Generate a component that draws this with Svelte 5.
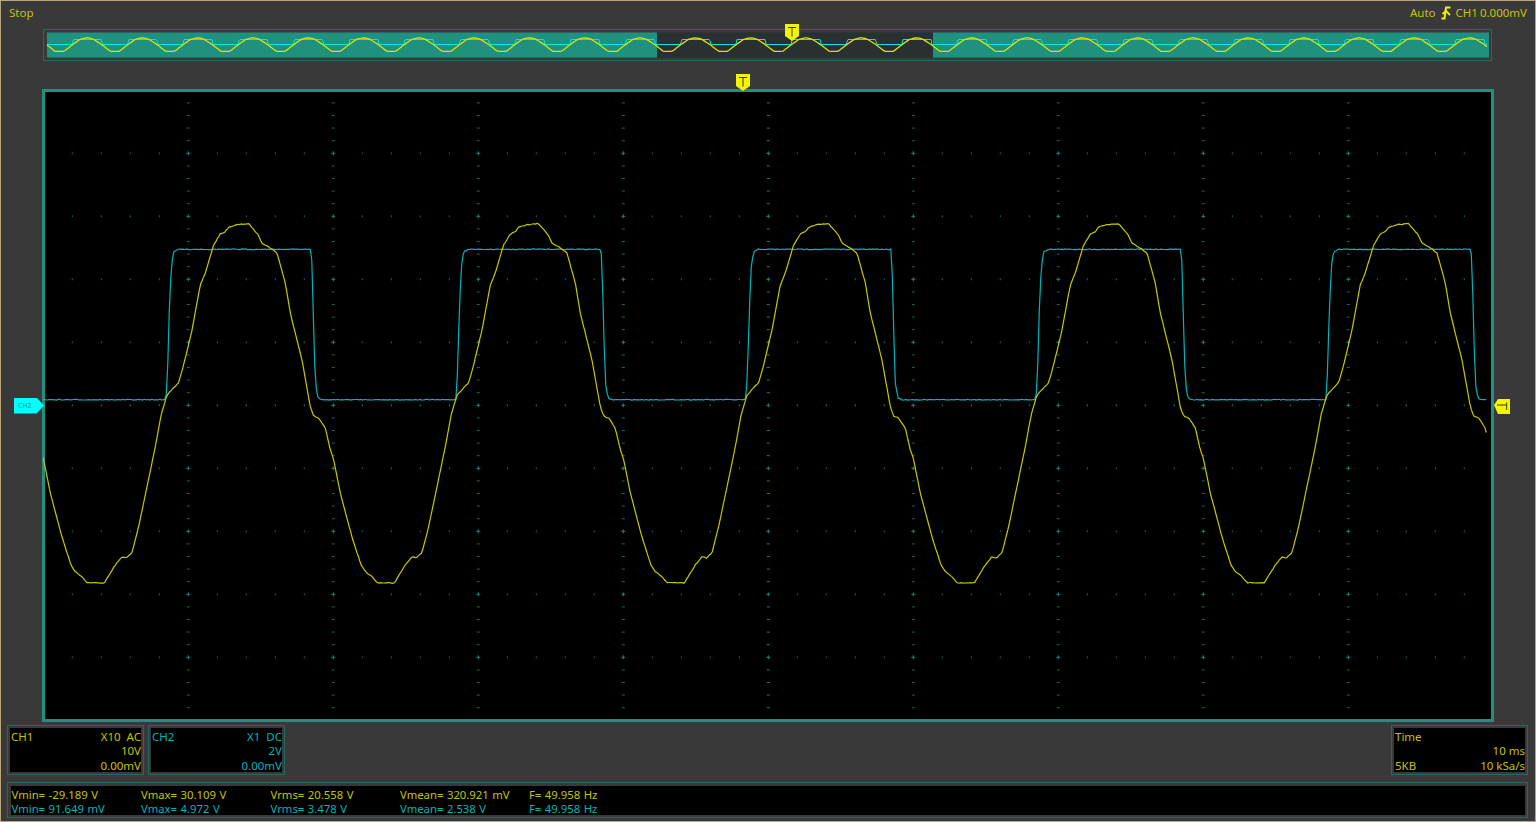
<script>
    // one period of each trace, x relative to the left edge of the scope
    const yellowShape = [
        [0, 458], [7, 493], [18.7, 537], [27.7, 565], [32, 571.7], [38.7, 576.7], [43.7, 582.7], [61, 583], [72, 565],
        [78.7, 556.7], [83, 558], [88.7, 552.7], [95, 528], [103.7, 486.7], [112, 446.7], [118, 414],
        [123.7, 395], [135.3, 382.7], [140.3, 365], [148.7, 330], [157, 285], [162, 273], [170.3, 245],
        [177, 234], [182, 231.7], [185.3, 227.3], [193.7, 224.7], [205.3, 223.7], [215, 235], [218.7, 243],
        [227, 248], [233.7, 253], [242, 283], [247, 313], [258.7, 360], [267, 406.7], [270.3, 416],
        [275.3, 418], [282, 428], [287, 450], [290, 458]
    ];
    const cyanShape = [
        [0, 399.7], [122.7, 399.7], [124.3, 370], [126, 310], [128, 266.7], [130.3, 251.7], [135.3, 249.3],
        [267.7, 249.3], [268.7, 263], [270.3, 326.7], [272, 383], [274.7, 398], [278.7, 399.7], [290, 399.7]
    ];
    // the overview traces are coarser, so they get their own shapes
    const ovYellowShape = [
        [0, 45], [8, 51.3], [17, 51.3], [25, 45], [33, 39.3], [40, 37.7], [46, 39], [55.3, 45]
    ];
    const ovCyanShape = [
        [0, 44.5], [25.3, 44.5], [26.3, 39.5], [54.5, 39.5], [55.3, 44.5]
    ];

    let seed = 7;
    function rnd() {
        seed = (seed * 16807) % 2147483647;
        return seed / 2147483647 - 0.5;
    }

    function at(shape, dx) {
        for (let i = 1; i < shape.length; i++) {
            if (dx <= shape[i][0]) {
                const a = shape[i - 1];
                const b = shape[i];
                return a[1] + ((dx - a[0]) / (b[0] - a[0])) * (b[1] - a[1]);
            }
        }
        return shape[shape.length - 1][1];
    }

    function mainTrace(shape, noise, end) {
        const pts = [];
        for (let x = 43.3; x <= end; x += 1.5) {
            const y = at(shape, (x - 43.3) % 290) + rnd() * noise;
            pts.push(x.toFixed(1) + "," + y.toFixed(1));
        }
        return pts.join(" ");
    }

    function overviewTrace(shape, step) {
        const pts = [];
        for (let x = 47; x <= 1487; x += step) {
            pts.push(x + "," + at(shape, (x - 47) % 55.3).toFixed(1));
        }
        return pts.join(" ");
    }

    const yellow = mainTrace(yellowShape, 0.7, 1487);
    const cyan = mainTrace(cyanShape, 0.8, 1487);
    const ovYellow = overviewTrace(ovYellowShape, 2);
    const ovCyan = overviewTrace(ovCyanShape, 1);

    // graticule, the middle column and row are a bit brighter
    const columns = [1, 2, 3, 4, 5, 6, 7, 8, 9].map((i) => 43.3 + 145 * i);
    const rows = [1, 2, 3, 4, 5, 6, 7, 8, 9].map((i) => 90.3 + 63 * i);
    let ticks = "";
    let midTicks = "";
    let crosses = "";
    columns.forEach((x, c) => {
        for (let k = 1; k < 50; k++) {
            if (k % 5 == 0) continue;
            const d = `M${x - 1.5} ${90.3 + 12.6 * k}h3`;
            if (c == 4) midTicks += d;
            else ticks += d;
        }
    });
    rows.forEach((y, r) => {
        for (let k = 1; k < 50; k++) {
            if (k % 5 == 0) continue;
            const d = `M${43.3 + 29 * k} ${y - 1}v2`;
            if (r == 4) midTicks += d;
            else ticks += d;
        }
    });
    for (const x of columns) {
        for (const y of rows) {
            crosses += `M${x - 2} ${y}h4M${x} ${y - 2}v4`;
        }
    }

    const measures = [
        { cls: "ch1", vals: ["Vmin= -29.189 V", "Vmax= 30.109 V", "Vrms= 20.558 V", "Vmean= 320.921 mV", "F= 49.958 Hz"] },
        { cls: "ch2", vals: ["Vmin= 91.649 mV", "Vmax= 4.972 V", "Vrms= 3.478 V", "Vmean= 2.538 V", "F= 49.958 Hz"] }
    ];
</script>

<div class="screen">
    <header class="top">
        <span>Stop</span>
        <div class="trigger">
            <span class="auto">Auto</span>
            <svg class="edge" width="10" height="14" viewBox="0 0 10 14">
                <path d="M0.5 12.5H3.5L5 1.5H9.5" fill="none" stroke="#f2f200" stroke-width="2" />
                <path d="M1.5 8L5 5L9 9" fill="none" stroke="#f2f200" stroke-width="1.8" />
            </svg>
            <span>CH1</span>
            <span class="level">0.000mV</span>
        </div>
    </header>

    <div class="overview">
        <svg width="1449" height="32" viewBox="43 29 1449 32">
            <rect x="47" y="32.5" width="610" height="25" fill="#21917f" />
            <rect x="657" y="32.5" width="276" height="25" fill="#2a3032" />
            <rect x="933" y="32.5" width="556" height="25" fill="#21917f" />
            <polyline points={ovCyan} fill="none" stroke="#00e8e8" stroke-width="1" />
            <polyline points={ovYellow} fill="none" stroke="#dfe000" stroke-width="1.3" />
        </svg>
        <svg class="tmark over" width="14" height="17" viewBox="0 0 14 17">
            <path d="M0 0H14V12L7 17L0 12Z" fill="#f5f500" />
            <path d="M3 3.5H11M7 3.5V12.5" stroke="#3a3a20" stroke-width="1" fill="none" />
        </svg>
    </div>

    <main class="scope">
        <svg class="grat" width="1446" height="627" viewBox="45 92 1446 627">
            <path d={ticks} stroke="#0e6a60" stroke-width="1" fill="none" />
            <path d={midTicks} stroke="#118074" stroke-width="1" fill="none" />
            <path d={crosses} stroke="#138a7a" stroke-width="1" fill="none" />
            <polyline points={cyan} fill="none" stroke="#00b4bc" stroke-width="1.2" />
            <polyline points={yellow} fill="none" stroke="#c8c800" stroke-width="1.2" />
        </svg>
        <svg class="tmark main" width="14" height="17" viewBox="0 0 14 17">
            <path d="M0 0H14V12L7 17L0 12Z" fill="#f5f500" />
            <path d="M3 3.5H11M7 3.5V12.5" stroke="#3a3a20" stroke-width="1" fill="none" />
        </svg>
        <div class="ch2mark">CH2</div>
        <svg class="rmark" width="16" height="15" viewBox="0 0 16 15">
            <path d="M0 6L4 0H16V15H4Z" fill="#f5f500" />
            <path d="M3 6H12.7M12.7 3.5V11" stroke="#3a3a20" stroke-width="1" fill="none" />
        </svg>
    </main>

    <div class="panels">
        <section class="panel ch1">
            <div class="box">
                <div class="line"><span>CH1</span><span>X10&nbsp;&nbsp;AC</span></div>
                <div class="line end">10V</div>
                <div class="line end">0.00mV</div>
            </div>
        </section>
        <section class="panel ch2">
            <div class="box">
                <div class="line"><span>CH2</span><span>X1&nbsp;&nbsp;DC</span></div>
                <div class="line end">2V</div>
                <div class="line end">0.00mV</div>
            </div>
        </section>
        <section class="panel time">
            <div class="box">
                <div class="line">Time</div>
                <div class="line end">10 ms</div>
                <div class="line"><span>5KB</span><span>10 kSa/s</span></div>
            </div>
        </section>
    </div>

    <div class="measures">
        <div class="box">
            {#each measures as m}
                <div class="mrow {m.cls}">
                    {#each m.vals as v}
                        <span>{v}</span>
                    {/each}
                </div>
            {/each}
        </div>
    </div>
</div>

<style>
    :global(body) {
        margin: 0;
        background: #393939;
    }

    .screen {
        width: 1536px;
        height: 822px;
        box-sizing: border-box;
        border: 1px solid #b9a67c;
        background: #393939;
        display: flex;
        flex-direction: column;
        overflow: hidden;
        font-family: "Noto Sans", "Open Sans", sans-serif;
        font-size: 11.5px;
        color: #c4c400;
    }

    .top {
        height: 28px;
        padding: 4px 8px 0;
        box-sizing: border-box;
        display: flex;
        justify-content: space-between;
        align-items: flex-start;
        line-height: 16px;
    }

    .trigger {
        display: flex;
        align-items: center;
        gap: 6px;
    }

    .auto {
        margin-right: -3px;
    }

    .edge {
        margin: 0 -1px 0 2px;
    }

    .level {
        margin-left: -4px;
    }

    .overview {
        position: relative;
        width: 1449px;
        height: 32px;
        box-sizing: border-box;
        margin-left: 42px;
        border: 1px solid #256a62;
    }

    .overview svg:first-child {
        display: block;
        margin: -1px;
    }

    .tmark {
        position: absolute;
        display: block;
    }

    .tmark.over {
        left: 741px;
        top: -6px;
    }

    .tmark.main {
        left: 691px;
        top: -18px;
    }

    .scope {
        position: relative;
        width: 1452px;
        height: 633px;
        box-sizing: border-box;
        margin: 28px 0 0 41px;
        background: #000;
        border: 3px solid #21917f;
    }

    .grat {
        display: block;
        overflow: visible;
    }

    .ch2mark {
        position: absolute;
        left: -31px;
        top: 305.5px;
        width: 30px;
        height: 16px;
        box-sizing: border-box;
        padding-left: 4px;
        background: #00ffff;
        clip-path: polygon(0 0, 75% 0, 100% 50%, 75% 100%, 0 100%);
        color: #1c8f90;
        font-size: 7px;
        line-height: 16px;
    }

    .rmark {
        position: absolute;
        left: 1449px;
        top: 307px;
    }

    .panels {
        display: flex;
        gap: 4px;
        margin: 3px 7px 0 6px;
    }

    .panel {
        width: 137px;
        height: 50px;
        box-sizing: border-box;
        border: 1px solid #256a62;
        padding: 2px;
    }

    .time {
        margin-left: auto;
    }

    .box {
        background: #000;
        height: 100%;
        box-sizing: border-box;
    }

    .panel .box {
        padding: 2px 0 0 1px;
    }

    .line {
        display: flex;
        justify-content: space-between;
        height: 14.4px;
        line-height: 14.4px;
    }

    .line.end {
        justify-content: flex-end;
    }

    .ch2 {
        color: #00b4bc;
    }

    .measures {
        height: 36px;
        box-sizing: border-box;
        margin: 7px 7px 0 6px;
        border: 1px solid #256a62;
        padding: 2.5px;
    }

    .measures .box {
        padding: 2px 1px 0 1px;
    }

    .mrow {
        display: grid;
        grid-template-columns: 129.5px 129.5px 129.5px 129px auto;
        height: 14px;
        line-height: 14px;
        font-size: 11.3px;
        word-spacing: 0.6px;
    }
</style>
